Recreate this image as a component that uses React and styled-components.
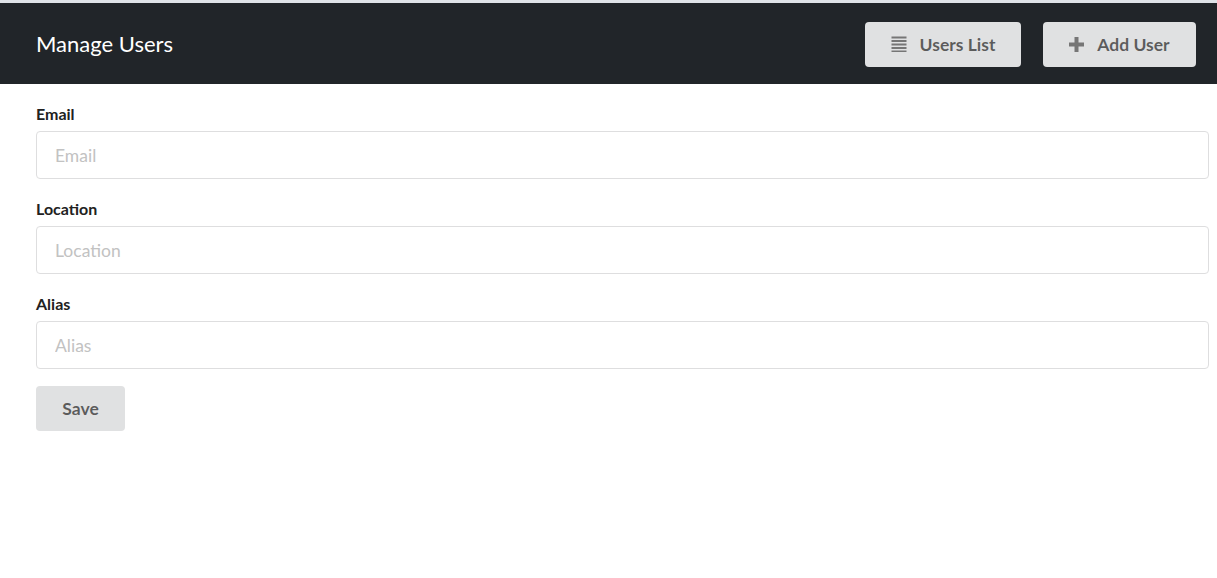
import React from "react";
import styled, { createGlobalStyle } from "styled-components";

const GlobalStyle = createGlobalStyle`
  body {
    margin: 0;
    font-family: Lato, "Open Sans", "Liberation Sans", sans-serif;
    background: #fff;
    color: #212121;
  }
  * { box-sizing: border-box; }
`;

const ListIcon = () => (
  <svg width="16" height="16" viewBox="0 0 16 16" fill="currentColor">
    <rect x="0.5" y="0.5" width="15" height="2" />
    <rect x="0.5" y="4" width="15" height="2" />
    <rect x="0.5" y="7.5" width="15" height="2" />
    <rect x="0.5" y="11" width="15" height="2" />
    <rect x="0.5" y="14.5" width="15" height="1.5" />
  </svg>
);

const PlusIcon = () => (
  <svg width="15" height="15" viewBox="0 0 15 15" fill="currentColor">
    <rect x="5.5" y="0" width="4" height="15" />
    <rect x="0" y="5.5" width="15" height="4" />
  </svg>
);

const fields = [
  { key: "email", label: "Email" },
  { key: "location", label: "Location" },
  { key: "alias", label: "Alias" },
];

export default function App() {
  return (
    <>
      <GlobalStyle />
      <TopStrip />
      <Header>
        <Title>Manage Users</Title>
        <Actions>
          <Button width={156}>
            <IconSlot>
              <ListIcon />
            </IconSlot>
            Users List
          </Button>
          <Button width={153}>
            <IconSlot>
              <PlusIcon />
            </IconSlot>
            Add User
          </Button>
        </Actions>
      </Header>
      <Form onSubmit={(e) => e.preventDefault()}>
        {fields.map((f) => (
          <Field key={f.key}>
            <Label htmlFor={f.key}>{f.label}</Label>
            <Input id={f.key} placeholder={f.label} />
          </Field>
        ))}
        <SaveButton type="submit">Save</SaveButton>
      </Form>
    </>
  );
}

const TopStrip = styled.div`
  height: 3px;
  background: #dfe3e8;
`;

const Header = styled.header`
  height: 81px;
  background: #212529;
  display: flex;
  align-items: center;
  justify-content: space-between;
  padding: 0 21px 0 36px;
`;

const Title = styled.h1`
  margin: 0;
  font-size: 22px;
  font-weight: 400;
  color: #fff;
`;

const Actions = styled.div`
  display: flex;
  gap: 22px;
  padding-top: 1px;
`;

const Button = styled.button`
  width: ${(p) => p.width}px;
  height: 45px;
  border: none;
  border-radius: 4px;
  background: #e0e1e2;
  color: rgba(0, 0, 0, 0.6);
  font-family: inherit;
  font-size: 17.5px;
  font-weight: 700;
  display: flex;
  align-items: center;
  justify-content: center;
  gap: 13px;
  cursor: pointer;
`;

const IconSlot = styled.span`
  display: inline-flex;
  color: #767676;
`;

const Form = styled.form`
  display: flex;
  flex-direction: column;
  align-items: flex-start;
  gap: 18px;
  padding: 18px 8px 0 36px;
`;

const Field = styled.div`
  width: 100%;
`;

const Label = styled.label`
  display: block;
  font-size: 16px;
  font-weight: 700;
  line-height: 24px;
  margin-bottom: 5px;
  color: #212121;
`;

const Input = styled.input`
  width: 100%;
  height: 48px;
  border: 1px solid #dededf;
  border-radius: 4px;
  padding: 0 18px;
  font-family: inherit;
  font-size: 17.5px;
  color: #212121;
  outline: none;

  &::placeholder {
    color: #c2c2c2;
  }
`;

const SaveButton = styled.button`
  width: 89px;
  height: 45px;
  margin-top: -1px;
  border: none;
  border-radius: 4px;
  background: #e0e1e2;
  color: rgba(0, 0, 0, 0.6);
  font-family: inherit;
  font-size: 17.5px;
  font-weight: 700;
  cursor: pointer;
`;
